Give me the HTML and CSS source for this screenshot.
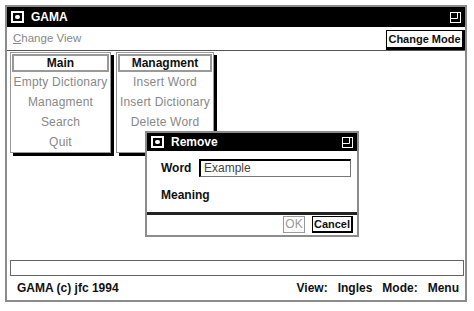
FILE: index.html
```html
<!DOCTYPE html>
<html>
<head>
<meta charset="utf-8">
<link rel="stylesheet" href="styles.css">
</head>
<body>
<div class="win">
  <div class="titlebar">
    <span class="ticon"><span class="tdot"></span></span>
    <span class="ttext">GAMA</span>
    <svg class="maxicon" viewBox="0 0 11 11"><rect x="0.5" y="0.5" width="10" height="10" fill="none" stroke="#fff"/><path d="M0.5 6.5 H7.5 V0.5" fill="none" stroke="#fff"/></svg>
  </div>
  <div class="menubar">
    <span class="cv"><span class="ul">C</span>hange View</span>
    <div class="cm">Change Mode</div>
  </div>
  <div class="content">
    <div class="menu m1">
      <div class="mhead">Main</div>
      <div class="mitem">Empty Dictionary</div>
      <div class="mitem">Managment</div>
      <div class="mitem">Search</div>
      <div class="mitem">Quit</div>
    </div>
    <div class="menu m2">
      <div class="mhead">Managment</div>
      <div class="mitem">Insert Word</div>
      <div class="mitem">Insert Dictionary</div>
      <div class="mitem">Delete Word</div>
    </div>
    <div class="dialog">
      <div class="dtitle">
        <span class="ticon"><span class="tdot"></span></span>
        <span class="ttext">Remove</span>
        <svg class="maxicon" viewBox="0 0 11 11"><rect x="0.5" y="0.5" width="10" height="10" fill="none" stroke="#fff"/><path d="M0.5 6.5 H7.5 V0.5" fill="none" stroke="#fff"/></svg>
      </div>
      <div class="dbody">
        <div class="drow">
          <span class="dlabel">Word</span>
          <div class="dinput">Example</div>
        </div>
        <div class="drow drow2">
          <span class="dlabel">Meaning</span>
        </div>
      </div>
      <div class="dfoot">
        <div class="btn ok">OK</div>
        <div class="btn cancel">Cancel</div>
      </div>
    </div>
  </div>
  <div class="status"></div>
  <div class="footer">
    <span>GAMA (c) jfc 1994</span>
    <div class="fr">
      <span>View:</span>
      <span>Ingles</span>
      <span>Mode:</span>
      <span>Menu</span>
    </div>
  </div>
</div>
</body>
</html>
```
FILE: styles.css
```css
* { box-sizing: border-box; }
body {
  margin: 0;
  width: 474px;
  height: 311px;
  overflow: hidden;
  background: #fff;
  font-family: "Liberation Sans", Arial, sans-serif;
  font-size: 12px;
  color: #111;
}
.win {
  margin: 5px 0 0 5px;
  width: 462px;
  height: 297px;
  border: 2px solid #8c8c8c;
  display: flex;
  flex-direction: column;
  background: #fff;
}
.titlebar {
  flex: none;
  height: 20px;
  background: #000;
  color: #fff;
  display: flex;
  align-items: center;
  padding: 0 4px;
}
.ticon {
  width: 13px;
  height: 12px;
  border: 2px solid #fff;
  display: flex;
  align-items: center;
  justify-content: center;
}
.tdot { width: 5px; height: 4px; border-radius: 2px; background: #fff; }
.ttext {
  margin-left: 7px;
  font-weight: bold;
  font-size: 12px;
}
.maxicon { margin-left: auto; width: 11px; height: 11px; }
.menubar {
  flex: none;
  height: 23px;
  display: flex;
  align-items: flex-start;
}
.cv {
  color: #888;
  padding-left: 6px;
  margin-top: 5px;
  font-size: 11.5px;
}
.cv .ul { text-decoration: underline; }
.cm {
  margin-left: auto;
  margin-top: 3px;
  width: 79px;
  height: 20px;
  border: 1px solid #000;
  border-right-width: 3px;
  border-bottom-width: 3px;
  background: #fff;
  font-weight: bold;
  font-size: 11px;
  text-align: center;
  line-height: 16px;
}
.content {
  flex: 1;
  position: relative;
  border-top: 1px solid #555;
  display: flex;
  align-items: flex-start;
  gap: 5px;
  padding: 1px 0 0 3px;
}
.menu {
  height: 101px;
  border: 1px solid #999;
  box-shadow: 3px 3px 0 #000;
  background: #fff;
  padding: 1px 1px 0;
}
.m1 { width: 101px; }
.m2 { width: 98px; }
.mhead {
  height: 18px;
  border: 2px solid #999;
  font-weight: bold;
  text-align: center;
  line-height: 14px;
}
.mitem {
  height: 20px;
  line-height: 20px;
  color: #888;
  text-align: center;
  white-space: nowrap;
  letter-spacing: 0.2px;
}
.dialog {
  position: absolute;
  left: 138px;
  top: 80px;
  width: 214px;
  height: 106px;
  border: 2px solid #8c8c8c;
  background: #fff;
  display: flex;
  flex-direction: column;
}
.dtitle {
  flex: none;
  height: 18px;
  background: #000;
  color: #fff;
  display: flex;
  align-items: center;
  padding: 0 4px;
}
.dbody {
  flex: 1;
  padding: 8px 6px 0 14px;
}
.drow {
  height: 18px;
  display: flex;
  align-items: center;
}
.drow2 { margin-top: 9px; }
.dlabel {
  width: 38px;
  font-weight: bold;
}
.dinput {
  width: 152px;
  height: 18px;
  border: 1px solid #777;
  border-left: 2px solid #000;
  border-top: 2px solid #000;
  color: #444;
  padding-left: 3px;
  line-height: 14px;
}
.dfoot {
  flex: none;
  height: 23px;
  border-top: 3px solid #222;
  display: flex;
  justify-content: flex-end;
  align-items: flex-start;
  gap: 7px;
  padding: 1px 4px 0 0;
}
.btn {
  height: 17px;
  line-height: 14px;
  text-align: center;
}
.ok {
  width: 22px;
  border: 1px solid #999;
  color: #999;
}
.cancel {
  width: 41px;
  border: 1px solid #000;
  border-right-width: 2px;
  border-bottom-width: 2px;
  font-weight: bold;
  font-size: 11px;
}
.status {
  flex: none;
  height: 16px;
  margin: 1px 1px 0 3px;
  border: 1px solid #666;
}
.footer {
  flex: none;
  height: 24px;
  display: flex;
  align-items: center;
  padding: 0 6px 0 10px;
  font-weight: bold;
}
.fr {
  margin-left: auto;
  display: flex;
  gap: 10px;
}
```
